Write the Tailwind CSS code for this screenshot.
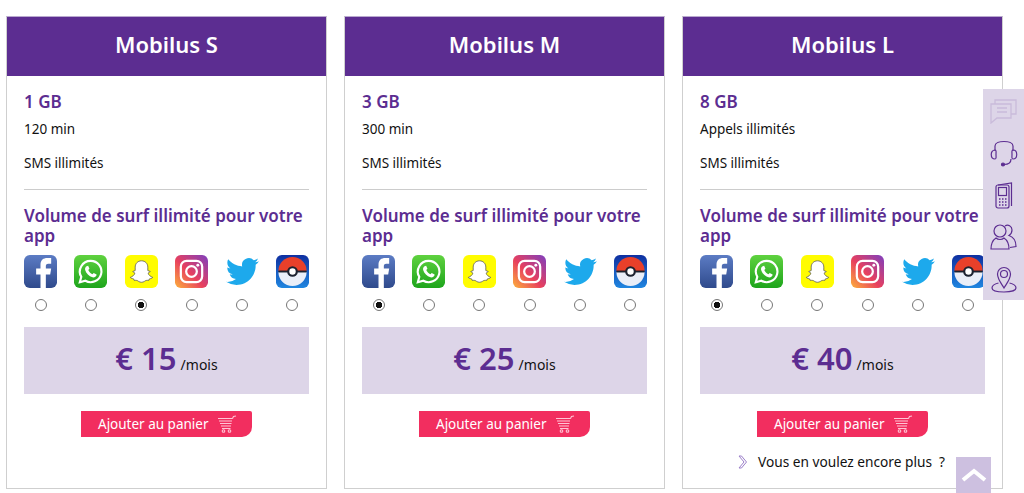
<!DOCTYPE html>
<html lang="fr">
<head>
<meta charset="utf-8">
<title>Mobilus</title>
<script src="https://cdn.jsdelivr.net/npm/@tailwindcss/browser@4"></script>
</head>
<body class="relative h-[493px] w-[1024px] overflow-hidden bg-white font-['Noto_Sans',sans-serif] text-[#111]">
<svg width="0" height="0" class="absolute">
  <defs>
    <linearGradient id="gf" x1="0" y1="0" x2="0" y2="1"><stop offset="0" stop-color="#5c7cc4"/><stop offset="1" stop-color="#2f4a8c"/></linearGradient>
    <linearGradient id="gw" x1="0" y1="0" x2="0" y2="1"><stop offset="0" stop-color="#5fd23f"/><stop offset="1" stop-color="#1ea51c"/></linearGradient>
    <linearGradient id="gi" x1="0" y1="1" x2="1" y2="0"><stop offset="0" stop-color="#fdb13b"/><stop offset=".45" stop-color="#e8405e"/><stop offset="1" stop-color="#7d3fc0"/></linearGradient>
    <linearGradient id="gp" x1="0" y1="0" x2="0" y2="1"><stop offset="0" stop-color="#0f2fa0"/><stop offset="1" stop-color="#1f86e0"/></linearGradient>
    <symbol id="fb" viewBox="0 0 34 34"><rect width="34" height="34" rx="6" fill="url(#gf)"/><path d="M17 34V20h-4.500v-6H17v-4c0-5 3-7 7-7h4v6h-3c-2 0-2.500 1-2.500 2.500V14H28l-1 6h-4.500v14z" fill="#fff"/></symbol>
    <symbol id="wa" viewBox="0 0 34 34"><rect width="34" height="34" rx="6" fill="url(#gw)"/><path d="M17 6a11 11 0 0 0-9.500 16.500L6 28l5.700-1.500A11 11 0 1 0 17 6z" fill="none" stroke="#fff" stroke-width="2.200"/><path d="M13 11.500c-1 .5-2 2-1.500 4 1 3.500 4 6.500 7.500 7.500 2 .5 3.500-.5 4-1.500l.3-1.500-3-1.500-1.300 1.300c-2-.8-3.500-2.300-4.300-4.300l1.200-1.300-1.300-3z" fill="#fff"/></symbol>
    <symbol id="sc" viewBox="0 0 34 34"><rect width="34" height="34" rx="6" fill="#fffc00"/><path d="M17 6c-4 0-6.500 3-6.500 6.500v3.500l-2.500 1c.5 1 2 1.200 2.200 1.700-.5 2-2.700 3.700-4.700 4.300.3 1.200 2.300 1.300 3.500 1.700l.5 1.500c2-.3 3.500 0 4.500 1 1.800 1.200 4.200 1.200 6 0 1-1 2.500-1.300 4.500-1l.5-1.500c1.200-.4 3.200-.5 3.500-1.700-2-.6-4.200-2.300-4.700-4.300.2-.5 1.700-.7 2.200-1.700l-2.500-1v-3.500C23.500 9 21 6 17 6z" fill="#fff" stroke="#555" stroke-width=".8"/></symbol>
    <symbol id="ig" viewBox="0 0 34 34"><rect width="34" height="34" rx="6" fill="url(#gi)"/><rect x="6" y="6" width="22" height="22" rx="6" fill="none" stroke="#fff" stroke-width="2.300"/><circle cx="17" cy="17" r="5.500" fill="none" stroke="#fff" stroke-width="2.300"/><circle cx="23.500" cy="10.500" r="1.500" fill="#fff"/></symbol>
    <symbol id="tw" viewBox="0 0 24 24"><path d="M23.950 4.570a10 10 0 0 1-2.820.77 4.960 4.960 0 0 0 2.160-2.720c-.95.550-2 .96-3.130 1.190a4.920 4.920 0 0 0-8.380 4.480C7.690 8.090 4.070 6.130 1.640 3.160a4.820 4.820 0 0 0-.67 2.480c0 1.710.87 3.210 2.190 4.100a4.900 4.900 0 0 1-2.230-.62v.06a4.920 4.920 0 0 0 3.950 4.830 5 5 0 0 1-2.210.08 4.940 4.940 0 0 0 4.600 3.420A9.870 9.870 0 0 1 0 19.540a14 14 0 0 0 7.560 2.210c9.050 0 14-7.500 14-13.980l-.01-.64a9.940 9.940 0 0 0 2.400-2.560z" fill="#1da9ec"/></symbol>
    <symbol id="pk" viewBox="0 0 34 34"><rect width="34" height="34" rx="6" fill="url(#gp)"/><path d="M2.500 16.500a14.500 14.500 0 0 1 29 0z" fill="#e8402a"/><path d="M2.500 17.500a14.500 14.500 0 0 0 29 0z" fill="#e9eef8"/><rect x="2.500" y="16" width="29" height="2" fill="#1c2230"/><circle cx="17" cy="17" r="5.500" fill="#1c2230"/><circle cx="17" cy="17" r="3.300" fill="#fff"/></symbol>
    <symbol id="cart" viewBox="0 0 20 18"><g fill="none" stroke="#ffc3d4" stroke-width="1.100"><path d="M1 3.500h14.500M2 6h13M3 8.500h11.500M4 11h10M5 13.500h8.500M15.500 3.500l1-2 2.500-.5"/><circle cx="6.500" cy="16" r="1.300"/><circle cx="12.500" cy="16" r="1.300"/></g></symbol>
  </defs>
</svg>

<main class="flex items-start gap-[17px] pl-[6px] pt-[16px]">

  <section class="flex h-[473px] w-[321px] flex-col border border-[#cfcfcf] border-t-[#b9a9cf]">
    <h2 class="flex h-[59px] items-center justify-center bg-[#5c2d91] pb-[5px] text-[22px] font-semibold text-white">Mobilus S</h2>
    <div class="flex flex-col px-[17px]">
      <p class="mt-[15px] text-[17px] leading-[22px] font-semibold text-[#5c2d91]">1 GB</p>
      <p class="mt-[7px] text-[13.500px] leading-[18px]">120 min</p>
      <p class="mt-[16px] text-[13.500px] leading-[18px]">SMS illimités</p>
      <hr class="mt-[17px] border-[#cccccc]">
      <h3 class="mt-[16px] text-[17px] leading-[20px] font-semibold text-[#5c2d91]">Volume de surf illimité pour votre app</h3>
      <div class="mt-[9px] flex justify-between">
        <label class="flex w-[33px] flex-col items-center gap-[11px]"><svg class="size-[33px]"><use href="#fb"/></svg><input type="radio" name="s" class="size-[12px] appearance-none rounded-full border border-[#767676] bg-white checked:bg-[radial-gradient(circle,#111_3px,#fff_3.500px)]"></label>
        <label class="flex w-[33px] flex-col items-center gap-[11px]"><svg class="size-[33px]"><use href="#wa"/></svg><input type="radio" name="s" class="size-[12px] appearance-none rounded-full border border-[#767676] bg-white checked:bg-[radial-gradient(circle,#111_3px,#fff_3.500px)]"></label>
        <label class="flex w-[33px] flex-col items-center gap-[11px]"><svg class="size-[33px]"><use href="#sc"/></svg><input type="radio" name="s" checked class="size-[12px] appearance-none rounded-full border border-[#767676] bg-white checked:bg-[radial-gradient(circle,#111_3px,#fff_3.500px)]"></label>
        <label class="flex w-[33px] flex-col items-center gap-[11px]"><svg class="size-[33px]"><use href="#ig"/></svg><input type="radio" name="s" class="size-[12px] appearance-none rounded-full border border-[#767676] bg-white checked:bg-[radial-gradient(circle,#111_3px,#fff_3.500px)]"></label>
        <label class="flex w-[33px] flex-col items-center gap-[11px]"><svg class="size-[33px]"><use href="#tw"/></svg><input type="radio" name="s" class="size-[12px] appearance-none rounded-full border border-[#767676] bg-white checked:bg-[radial-gradient(circle,#111_3px,#fff_3.500px)]"></label>
        <label class="flex w-[33px] flex-col items-center gap-[11px]"><svg class="size-[33px]"><use href="#pk"/></svg><input type="radio" name="s" class="size-[12px] appearance-none rounded-full border border-[#767676] bg-white checked:bg-[radial-gradient(circle,#111_3px,#fff_3.500px)]"></label>
      </div>
      <div class="mt-[16px] flex h-[67px] items-center justify-center gap-[4px] bg-[#ddd5e8]">
        <span class="mb-[5px] text-[31px] font-semibold text-[#5c2d91]">€ 15</span><span class="mt-[8px] text-[14px]">/mois</span>
      </div>
      <a class="mt-[17px] flex h-[26px] w-[171px] items-center gap-[8px] self-center rounded-br-[10px] rounded-tr-[2px] bg-[#f22e5f] pl-[17px] text-[13.500px] text-white">Ajouter au panier<svg class="h-[18px] w-[20px]"><use href="#cart"/></svg></a>
    </div>
  </section>

  <section class="flex h-[473px] w-[321px] flex-col border border-[#cfcfcf] border-t-[#b9a9cf]">
    <h2 class="flex h-[59px] items-center justify-center bg-[#5c2d91] pb-[5px] text-[22px] font-semibold text-white">Mobilus M</h2>
    <div class="flex flex-col px-[17px]">
      <p class="mt-[15px] text-[17px] leading-[22px] font-semibold text-[#5c2d91]">3 GB</p>
      <p class="mt-[7px] text-[13.500px] leading-[18px]">300 min</p>
      <p class="mt-[16px] text-[13.500px] leading-[18px]">SMS illimités</p>
      <hr class="mt-[17px] border-[#cccccc]">
      <h3 class="mt-[16px] text-[17px] leading-[20px] font-semibold text-[#5c2d91]">Volume de surf illimité pour votre app</h3>
      <div class="mt-[9px] flex justify-between">
        <label class="flex w-[33px] flex-col items-center gap-[11px]"><svg class="size-[33px]"><use href="#fb"/></svg><input type="radio" name="m" checked class="size-[12px] appearance-none rounded-full border border-[#767676] bg-white checked:bg-[radial-gradient(circle,#111_3px,#fff_3.500px)]"></label>
        <label class="flex w-[33px] flex-col items-center gap-[11px]"><svg class="size-[33px]"><use href="#wa"/></svg><input type="radio" name="m" class="size-[12px] appearance-none rounded-full border border-[#767676] bg-white checked:bg-[radial-gradient(circle,#111_3px,#fff_3.500px)]"></label>
        <label class="flex w-[33px] flex-col items-center gap-[11px]"><svg class="size-[33px]"><use href="#sc"/></svg><input type="radio" name="m" class="size-[12px] appearance-none rounded-full border border-[#767676] bg-white checked:bg-[radial-gradient(circle,#111_3px,#fff_3.500px)]"></label>
        <label class="flex w-[33px] flex-col items-center gap-[11px]"><svg class="size-[33px]"><use href="#ig"/></svg><input type="radio" name="m" class="size-[12px] appearance-none rounded-full border border-[#767676] bg-white checked:bg-[radial-gradient(circle,#111_3px,#fff_3.500px)]"></label>
        <label class="flex w-[33px] flex-col items-center gap-[11px]"><svg class="size-[33px]"><use href="#tw"/></svg><input type="radio" name="m" class="size-[12px] appearance-none rounded-full border border-[#767676] bg-white checked:bg-[radial-gradient(circle,#111_3px,#fff_3.500px)]"></label>
        <label class="flex w-[33px] flex-col items-center gap-[11px]"><svg class="size-[33px]"><use href="#pk"/></svg><input type="radio" name="m" class="size-[12px] appearance-none rounded-full border border-[#767676] bg-white checked:bg-[radial-gradient(circle,#111_3px,#fff_3.500px)]"></label>
      </div>
      <div class="mt-[16px] flex h-[67px] items-center justify-center gap-[4px] bg-[#ddd5e8]">
        <span class="mb-[5px] text-[31px] font-semibold text-[#5c2d91]">€ 25</span><span class="mt-[8px] text-[14px]">/mois</span>
      </div>
      <a class="mt-[17px] flex h-[26px] w-[171px] items-center gap-[8px] self-center rounded-br-[10px] rounded-tr-[2px] bg-[#f22e5f] pl-[17px] text-[13.500px] text-white">Ajouter au panier<svg class="h-[18px] w-[20px]"><use href="#cart"/></svg></a>
    </div>
  </section>

  <section class="flex h-[473px] w-[321px] flex-col border border-[#cfcfcf] border-t-[#b9a9cf]">
    <h2 class="flex h-[59px] items-center justify-center bg-[#5c2d91] pb-[5px] text-[22px] font-semibold text-white">Mobilus L</h2>
    <div class="flex flex-col px-[17px]">
      <p class="mt-[15px] text-[17px] leading-[22px] font-semibold text-[#5c2d91]">8 GB</p>
      <p class="mt-[7px] text-[13.500px] leading-[18px]">Appels illimités</p>
      <p class="mt-[16px] text-[13.500px] leading-[18px]">SMS illimités</p>
      <hr class="mt-[17px] border-[#cccccc]">
      <h3 class="mt-[16px] text-[17px] leading-[20px] font-semibold text-[#5c2d91]">Volume de surf illimité pour votre app</h3>
      <div class="mt-[9px] flex justify-between">
        <label class="flex w-[33px] flex-col items-center gap-[11px]"><svg class="size-[33px]"><use href="#fb"/></svg><input type="radio" name="l" checked class="size-[12px] appearance-none rounded-full border border-[#767676] bg-white checked:bg-[radial-gradient(circle,#111_3px,#fff_3.500px)]"></label>
        <label class="flex w-[33px] flex-col items-center gap-[11px]"><svg class="size-[33px]"><use href="#wa"/></svg><input type="radio" name="l" class="size-[12px] appearance-none rounded-full border border-[#767676] bg-white checked:bg-[radial-gradient(circle,#111_3px,#fff_3.500px)]"></label>
        <label class="flex w-[33px] flex-col items-center gap-[11px]"><svg class="size-[33px]"><use href="#sc"/></svg><input type="radio" name="l" class="size-[12px] appearance-none rounded-full border border-[#767676] bg-white checked:bg-[radial-gradient(circle,#111_3px,#fff_3.500px)]"></label>
        <label class="flex w-[33px] flex-col items-center gap-[11px]"><svg class="size-[33px]"><use href="#ig"/></svg><input type="radio" name="l" class="size-[12px] appearance-none rounded-full border border-[#767676] bg-white checked:bg-[radial-gradient(circle,#111_3px,#fff_3.500px)]"></label>
        <label class="flex w-[33px] flex-col items-center gap-[11px]"><svg class="size-[33px]"><use href="#tw"/></svg><input type="radio" name="l" class="size-[12px] appearance-none rounded-full border border-[#767676] bg-white checked:bg-[radial-gradient(circle,#111_3px,#fff_3.500px)]"></label>
        <label class="flex w-[33px] flex-col items-center gap-[11px]"><svg class="size-[33px]"><use href="#pk"/></svg><input type="radio" name="l" class="size-[12px] appearance-none rounded-full border border-[#767676] bg-white checked:bg-[radial-gradient(circle,#111_3px,#fff_3.500px)]"></label>
      </div>
      <div class="mt-[16px] flex h-[67px] items-center justify-center gap-[4px] bg-[#ddd5e8]">
        <span class="mb-[5px] text-[31px] font-semibold text-[#5c2d91]">€ 40</span><span class="mt-[8px] text-[14px]">/mois</span>
      </div>
      <a class="mt-[17px] flex h-[26px] w-[171px] items-center gap-[8px] self-center rounded-br-[10px] rounded-tr-[2px] bg-[#f22e5f] pl-[17px] text-[13.500px] text-white">Ajouter au panier<svg class="h-[18px] w-[20px]"><use href="#cart"/></svg></a>
      <p class="mt-[16px] flex items-center gap-[9px] self-center pr-[2px] text-[13.700px] leading-[18px]"><svg class="h-[14px] w-[11px]" viewBox="0 0 11 14" fill="none" stroke="#9b7fc9" stroke-width="1"><path d="M1 1h2.500l5 6-5 6H1l5-6z"/></svg>Vous en voulez encore plus&nbsp;&nbsp;?</p>
    </div>
  </section>
</main>

<aside class="absolute top-[89px] right-0 flex h-[211px] w-[41px] flex-col items-center bg-[#ddd5e8] pt-[1px] text-[#5c2d91]">
  <div class="flex h-[42px] items-center justify-center"><svg class="h-[25px] w-[27px] opacity-15" viewBox="0 0 27 25" fill="none" stroke="currentColor" stroke-width="1.300"><path d="M1 5h20v14H7l-6 5z"/><path d="M5 5V1h21v14h-5M7 9h10M7 13h10"/></svg></div>
  <div class="flex h-[42px] items-center justify-center"><svg class="h-[27px] w-[28px]" viewBox="0 0 28 27" fill="none" stroke="currentColor" stroke-width="1.200"><path d="M5 11V6c0-6 18-6 18 0v5"/><path d="M5 10c-5 0-5 9 0 9 1.500 0 1-2.500 1-4.500S6.500 10 5 10zM23 10c5 0 5 9 0 9-1.500 0-1-2.500-1-4.500s-.5-4.500 1-4.500z"/><path d="M21 19c0 3.500-3 5.500-7 5.500"/><circle cx="13" cy="24.500" r="1.500" fill="currentColor"/></svg></div>
  <div class="flex h-[42px] items-center justify-center"><svg class="h-[27px] w-[18px]" viewBox="0 0 18 27" fill="none" stroke="currentColor" stroke-width="1.200"><path d="M3 3 16.500 1v23"/><rect x="1" y="3" width="13" height="23" rx="2"/><rect x="3.500" y="5.500" width="8" height="8"/><path d="M4 17h1.500M7 17h1.500M10 17h1.500M4 20h1.500M7 20h1.500M10 20h1.500M4 23h1.500M7 23h1.500M10 23h1.500" stroke-width="1.500"/></svg></div>
  <div class="flex h-[42px] items-center justify-center"><svg class="h-[28px] w-[27px]" viewBox="0 0 27 28" fill="none" stroke="currentColor" stroke-width="1.200"><circle cx="10" cy="8" r="6"/><path d="M1 26c0-6 2-9 5-11 2 2 6 2 8 0 3 2 5 5 5 11z"/><path d="M15 3c3-2 7 0 7 4 0 3-1.500 4.500-3 5.500 3 1 7 4 7 11l-6 1"/></svg></div>
  <div class="flex h-[42px] items-center justify-center"><svg class="h-[27px] w-[26px]" viewBox="0 0 26 27" fill="none" stroke="currentColor" stroke-width="1.200"><path d="M13 22C10 17 6.500 13 6.500 8a6.500 6.500 0 0 1 13 0c0 5-3.500 9-6.500 14z"/><circle cx="13" cy="8" r="3.500"/><path d="M7.500 17C3.500 18 1 20 1 22c0 2.500 5 4 12 4s12-1.500 12-4c0-2-2.500-4-6.500-5"/></svg></div>
</aside>

<a class="absolute top-[457px] left-[956px] flex h-[36px] w-[35px] items-center justify-center bg-[#cdc0e0]">
  <svg class="h-[14px] w-[26px]" viewBox="0 0 26 14" fill="none" stroke="#fff" stroke-width="4"><path d="M2 12 13 3l11 9"/></svg>
</a>
</body>
</html>
